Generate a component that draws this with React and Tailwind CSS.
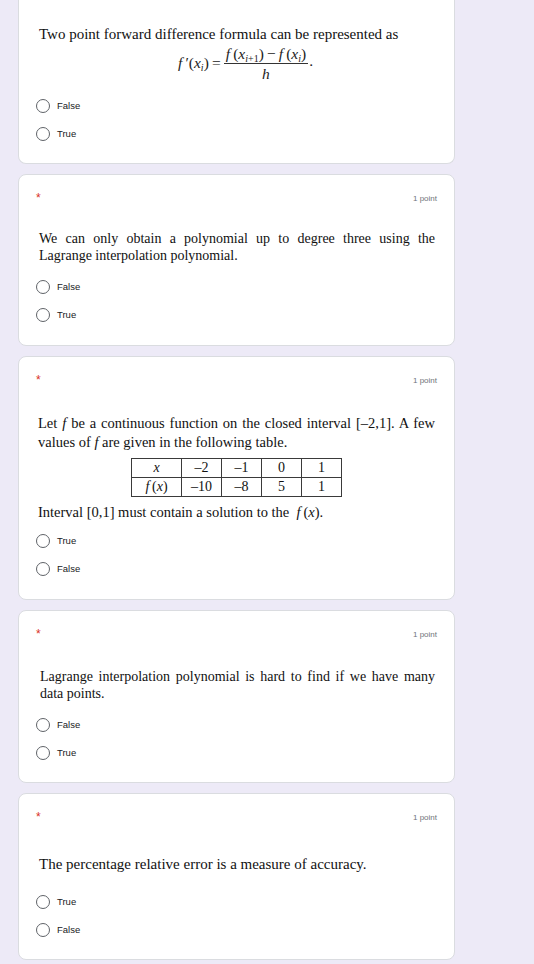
import React from "react";

const serif = "font-['Liberation_Serif','Times_New_Roman',serif]";
const sans = "font-['Liberation_Sans',Arial,sans-serif]";

function Radio({ label }) {
  return (
    <div className="h-[28px] flex items-center gap-[7px]">
      <span className="w-[14px] h-[14px] rounded-full border-[1.5px] border-[#5f6368] bg-white shrink-0" />
      <span className={`${sans} text-[9.5px] text-[#202124]`}>{label}</span>
    </div>
  );
}

function Header() {
  return (
    <div className="h-[14px] flex items-center justify-between">
      <span className={`${sans} text-[12px] leading-none text-[#d93025] -mt-[1px]`}>*</span>
      <span className={`${sans} text-[8px] leading-none text-[#70757a] mt-[2px]`}>1 point</span>
    </div>
  );
}

function Options({ items, className }) {
  return (
    <div className={className}>
      {items.map((it) => (
        <Radio key={it} label={it} />
      ))}
    </div>
  );
}

const card = "bg-white border border-[#dadce0] rounded-[8px] px-[17px]";

export default function App() {
  return (
    <div className="min-h-[964px] bg-[#edeaf7] pl-[18px] w-[534px]">
      <div className="w-[437px] flex flex-col gap-[10px]">
        {/* Q1 */}
        <div className={`${card} border-t-0 rounded-t-none pt-[26px] pb-[15px]`}>
          <div className={`${serif} text-[15px] leading-[17px] text-[#111] ml-[3px]`}>
            Two point forward difference formula can be represented as
          </div>
          <div className={`${serif} text-[15.5px] text-[#222] flex items-start pl-[142px] mt-[3px]`}>
            <span className="mt-[9px] leading-[16px] whitespace-nowrap">
              <i>f</i>&thinsp;′(<i>x</i>
              <sub className="text-[10px]">
                <i>i</i>
              </sub>
              )&thinsp;=&thinsp;
            </span>
            <span className="flex flex-col items-stretch">
              <span className="h-[17px] leading-[15px] whitespace-nowrap px-[2px]">
                <i>f</i>&thinsp;(<i>x</i>
                <sub className="text-[10px]">
                  <i>i</i>+1
                </sub>
                )&thinsp;−&thinsp;<i>f</i>&thinsp;(<i>x</i>
                <sub className="text-[10px]">
                  <i>i</i>
                </sub>
                )
              </span>
              <span className="h-[1px] bg-[#333]" />
              <span className="h-[20px] leading-[20px] text-center">
                <i>h</i>
              </span>
            </span>
            <span className="mt-[7px] leading-[16px] ml-[1px]">.</span>
          </div>
          <Options items={["False", "True"]} className="mt-[8px]" />
        </div>

        {/* Q2 */}
        <div className={`${card} pt-[16px] pb-[16px]`}>
          <Header />
          <div className={`${serif} text-[14px] leading-[17px] text-[#111] ml-[3px] mr-[2px] mt-[25px]`}>
            <div className="text-justify [text-align-last:justify]">
              We can only obtain a polynomial up to degree three using the
            </div>
            <div>Lagrange interpolation polynomial.</div>
          </div>
          <Options items={["False", "True"]} className="mt-[9px]" />
        </div>

        {/* Q3 */}
        <div className={`${card} pt-[16px] pb-[16px]`}>
          <Header />
          <div className={`${serif} text-[14.5px] leading-[19px] text-[#111] ml-[2px] mr-[2px] mt-[27px]`}>
            <div className="text-justify [text-align-last:justify]">
              Let <i>f</i> be a continuous function on the closed interval [–2,1]. A few
            </div>
            <div>
              values of <i>f</i> are given in the following table.
            </div>
          </div>
          <table className={`${serif} mx-auto mt-[6px] border-collapse text-[14px] text-[#111]`}>
            <tbody>
              <tr>
                <td className="border border-[#3a3a3a] w-[50px] h-[19px] p-0 leading-[18px] text-center">
                  <i>x</i>
                </td>
                {["–2", "–1", "0", "1"].map((v) => (
                  <td key={v} className="border border-[#3a3a3a] w-[40px] h-[19px] p-0 leading-[18px] text-center">
                    {v}
                  </td>
                ))}
              </tr>
              <tr>
                <td className="border border-[#3a3a3a] w-[50px] h-[19px] p-0 leading-[18px] text-center">
                  <i>f</i>&thinsp;(<i>x</i>)
                </td>
                {["–10", "–8", "5", "1"].map((v) => (
                  <td key={v} className="border border-[#3a3a3a] w-[40px] h-[19px] p-0 leading-[18px] text-center">
                    {v}
                  </td>
                ))}
              </tr>
            </tbody>
          </table>
          <div className={`${serif} text-[14.5px] leading-[19px] text-[#111] ml-[2px] mt-[6px]`}>
            Interval [0,1] must contain a solution to the&nbsp; <i>f</i>&thinsp;(<i>x</i>).
          </div>
          <Options items={["True", "False"]} className="mt-[5px]" />
        </div>

        {/* Q4 */}
        <div className={`${card} pt-[16px] pb-[15px]`}>
          <Header />
          <div className={`${serif} text-[14px] leading-[17px] text-[#111] ml-[4px] mr-[2px] mt-[27px]`}>
            <div className="text-justify [text-align-last:justify]">
              Lagrange interpolation polynomial is hard to find if we have many
            </div>
            <div>data points.</div>
          </div>
          <Options items={["False", "True"]} className="mt-[9px]" />
        </div>

        {/* Q5 */}
        <div className={`${card} pt-[16px] pb-[15px]`}>
          <Header />
          <div className={`${serif} text-[15px] leading-[17px] text-[#111] ml-[3px] mt-[32px]`}>
            The percentage relative error is a measure of accuracy.
          </div>
          <Options items={["True", "False"]} className="mt-[15px]" />
        </div>
      </div>
    </div>
  );
}
